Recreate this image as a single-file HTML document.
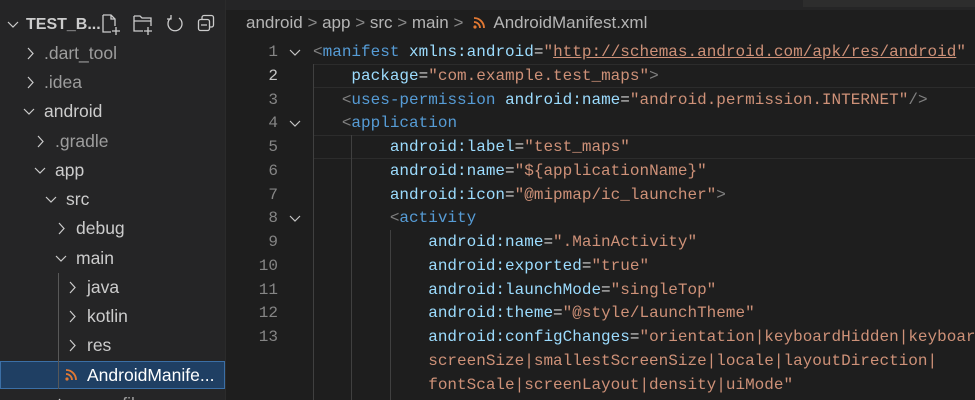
<!DOCTYPE html>
<html style="width:975px;height:400px;overflow:hidden"><head><meta charset="utf-8"><style>
html,body{margin:0;width:975px;height:400px;overflow:hidden}
body{background:#1e1e1e;position:relative;font-family:"Liberation Sans",sans-serif}
.sb{position:absolute;left:0;top:0;width:225px;height:400px;background:#252526;border-right:1px solid #2b2b2b;overflow:hidden}
.row{position:absolute;left:0;width:225px;height:29px;line-height:29px;color:#cccccc;font-size:17.5px;white-space:nowrap}
.chev{position:absolute;top:0;width:14px;height:29px}
.sel{background:#1f3f63;outline:1px solid #3b6fa6;outline-offset:-1px}
.tabs{position:absolute;left:226px;top:0;width:749px;height:10px;background:#252526}
.bc{position:absolute;left:246px;top:13px;font-size:17px;color:#b5b5b5;white-space:nowrap}
.code{position:absolute;left:0;top:2px;font-family:"Liberation Mono",monospace;font-size:16px}
.ln{position:absolute;left:226px;width:52px;text-align:right;color:#858585;height:24px;line-height:24px}
.l{position:absolute;left:313px;height:24px;line-height:24px;white-space:pre;color:#d4d4d4}
.t{color:#569cd6}.a{color:#9cdcfe}.s{color:#ce9178}.p{color:#808080}
.u{text-decoration:underline;text-decoration-color:#ce9178}
.g{position:absolute;width:1px;background:#404040}
.hl{position:absolute;left:313px;width:662px;height:22px;border-top:1px solid #2c2c2c;border-bottom:1px solid #2c2c2c}
.fold{position:absolute;left:288px;width:14px;height:24px}
</style></head><body>
<div class="sb">
 <div class="row" style="top:10px;font-weight:bold;font-size:16px;left:0">
  <svg class="chev" style="left:6px" viewBox="0 0 14 29"><path d="M2 12l5 5 5-5" stroke="#ccc" fill="none" stroke-width="1.2"/></svg>
  <span style="position:absolute;left:26px">TEST_B...</span>
  <svg style="position:absolute;left:101px;top:3px" width="20" height="22" viewBox="0 0 20 22"><path d="M2 2h8l4 4v7M2 2v17h8" stroke="#ccc" fill="none" stroke-width="1.3"/><path d="M10 2v4h4M15 14v8M11 18h8" stroke="#ccc" fill="none" stroke-width="1.3"/></svg>
  <svg style="position:absolute;left:132px;top:3px" width="22" height="22" viewBox="0 0 22 22"><path d="M2 3h6l2 2h9v8M2 3v15h9M2 8h17" stroke="#ccc" fill="none" stroke-width="1.3"/><path d="M16 14v8M12 18h8" stroke="#ccc" fill="none" stroke-width="1.3"/></svg>
  <svg style="position:absolute;left:165px;top:4px" width="20" height="20" viewBox="0 0 20 20"><path d="M14 4a7 7 0 1 1-8 0M6 1v4H2" stroke="#ccc" fill="none" stroke-width="1.3"/></svg>
  <svg style="position:absolute;left:197px;top:4px" width="18" height="18" viewBox="0 0 18 18"><rect x="1.5" y="5.5" width="11" height="11" rx="2" stroke="#ccc" fill="none" stroke-width="1.3"/><path d="M5 5V3.5a2 2 0 0 1 2-2h7.5a2 2 0 0 1 2 2V11a2 2 0 0 1-2 2H13M4 11h6" stroke="#ccc" fill="none" stroke-width="1.3"/></svg>
 </div>
 <div class="row" style="top:39px"><svg class="chev" style="left:24px" viewBox="0 0 14 29"><path d="M4 9l5 5.5-5 5.5" stroke="#ccc" fill="none" stroke-width="1.2"/></svg><span style="position:absolute;left:44px;color:#9d9d9d">.dart_tool</span></div>
 <div class="row" style="top:68px"><svg class="chev" style="left:24px" viewBox="0 0 14 29"><path d="M4 9l5 5.5-5 5.5" stroke="#ccc" fill="none" stroke-width="1.2"/></svg><span style="position:absolute;left:44px;color:#9d9d9d">.idea</span></div>
 <div class="row" style="top:97px"><svg class="chev" style="left:22px" viewBox="0 0 14 29"><path d="M2 12l5 5 5-5" stroke="#ccc" fill="none" stroke-width="1.2"/></svg><span style="position:absolute;left:44px">android</span></div>
 <div class="row" style="top:127px"><svg class="chev" style="left:34px" viewBox="0 0 14 29"><path d="M4 9l5 5.5-5 5.5" stroke="#ccc" fill="none" stroke-width="1.2"/></svg><span style="position:absolute;left:55px;color:#9d9d9d">.gradle</span></div>
 <div class="row" style="top:156px"><svg class="chev" style="left:33px" viewBox="0 0 14 29"><path d="M2 12l5 5 5-5" stroke="#ccc" fill="none" stroke-width="1.2"/></svg><span style="position:absolute;left:55px">app</span></div>
 <div class="row" style="top:185px"><svg class="chev" style="left:44px" viewBox="0 0 14 29"><path d="M2 12l5 5 5-5" stroke="#ccc" fill="none" stroke-width="1.2"/></svg><span style="position:absolute;left:66px">src</span></div>
 <div class="row" style="top:214px"><svg class="chev" style="left:55px" viewBox="0 0 14 29"><path d="M4 9l5 5.5-5 5.5" stroke="#ccc" fill="none" stroke-width="1.2"/></svg><span style="position:absolute;left:76px">debug</span></div>
 <div class="row" style="top:244px"><svg class="chev" style="left:54px" viewBox="0 0 14 29"><path d="M2 12l5 5 5-5" stroke="#ccc" fill="none" stroke-width="1.2"/></svg><span style="position:absolute;left:76px">main</span></div>
 <div style="position:absolute;left:58px;top:273px;width:1px;height:116px;background:#585858"></div>
 <div class="row" style="top:273px"><svg class="chev" style="left:66px" viewBox="0 0 14 29"><path d="M4 9l5 5.5-5 5.5" stroke="#ccc" fill="none" stroke-width="1.2"/></svg><span style="position:absolute;left:87px">java</span></div>
 <div class="row" style="top:302px"><svg class="chev" style="left:66px" viewBox="0 0 14 29"><path d="M4 9l5 5.5-5 5.5" stroke="#ccc" fill="none" stroke-width="1.2"/></svg><span style="position:absolute;left:87px">kotlin</span></div>
 <div class="row" style="top:331px"><svg class="chev" style="left:66px" viewBox="0 0 14 29"><path d="M4 9l5 5.5-5 5.5" stroke="#ccc" fill="none" stroke-width="1.2"/></svg><span style="position:absolute;left:87px">res</span></div>
 <div class="row sel" style="top:361px;height:28px;line-height:28px"><div style="position:absolute;left:58px;top:0;width:1px;height:28px;background:#585858"></div>
  <svg style="position:absolute;left:65px;top:8px" width="12" height="12" viewBox="0 0 12 12"><circle cx="2" cy="10" r="1.6" fill="#e37933"/><path d="M1 5a6 6 0 0 1 6 6M1 1a10 10 0 0 1 10 10" stroke="#e37933" fill="none" stroke-width="1.8"/></svg>
  <span style="position:absolute;left:87px;color:#fff">AndroidManife...</span></div>
 <div class="row" style="top:390px"><svg class="chev" style="left:55px" viewBox="0 0 14 29"><path d="M4 9l5 5.5-5 5.5" stroke="#ccc" fill="none" stroke-width="1.2"/></svg><span style="position:absolute;left:97px;color:#9d9d9d">profile</span></div>
</div>
<div class="tabs"></div>
<div style="position:absolute;left:803px;top:0;width:172px;height:7px;background:#2d2d2d"></div>
<div class="bc">android <span style="color:#888">&gt;</span> app <span style="color:#888">&gt;</span> src <span style="color:#888">&gt;</span> main <span style="color:#888">&gt;</span> &nbsp;<svg width="12" height="12" viewBox="0 0 12 12" style="vertical-align:-1px"><circle cx="2" cy="10" r="1.6" fill="#e37933"/><path d="M1 5a6 6 0 0 1 6 6M1 1a10 10 0 0 1 10 10" stroke="#e37933" fill="none" stroke-width="1.8"/></svg>&nbsp; AndroidManifest.xml</div>
<div class="code">
 <div class="hl" style="top:62px"></div>
 <div class="hl" style="top:133px"></div>
 <div class="g" style="left:313px;top:62px;height:338px"></div>
 <div class="g" style="left:351px;top:133px;height:267px"></div>
 <div class="g" style="left:390px;top:228px;height:172px"></div>
 <div class="ln" style="top:38px">1</div><div class="ln" style="top:62px;color:#c6c6c6">2</div><div class="ln" style="top:86px">3</div><div class="ln" style="top:109px">4</div><div class="ln" style="top:133px">5</div><div class="ln" style="top:157px">6</div><div class="ln" style="top:181px">7</div><div class="ln" style="top:204px">8</div><div class="ln" style="top:228px">9</div><div class="ln" style="top:252px">10</div><div class="ln" style="top:276px">11</div><div class="ln" style="top:299px">12</div><div class="ln" style="top:323px">13</div>
 <svg class="fold" style="top:38px" viewBox="0 0 14 24"><path d="M2 10l5 5 5-5" stroke="#c5c5c5" fill="none" stroke-width="1.2"/></svg>
 <svg class="fold" style="top:109px" viewBox="0 0 14 24"><path d="M2 10l5 5 5-5" stroke="#c5c5c5" fill="none" stroke-width="1.2"/></svg>
 <svg class="fold" style="top:204px" viewBox="0 0 14 24"><path d="M2 10l5 5 5-5" stroke="#c5c5c5" fill="none" stroke-width="1.2"/></svg>
 <div class="l" style="top:38px"><span class="p">&lt;</span><span class="t">manifest</span> <span class="a">xmlns:android</span>=<span class="s">"<span class="u">http://schemas.android.com/apk/res/android</span>"</span></div>
 <div class="l" style="top:62px">    <span class="a">package</span>=<span class="s">"com.example.test_maps"</span><span class="p">&gt;</span></div>
 <div class="l" style="top:86px">   <span class="p">&lt;</span><span class="t">uses-permission</span> <span class="a">android:name</span>=<span class="s">"android.permission.INTERNET"</span><span class="p">/&gt;</span></div>
 <div class="l" style="top:109px">   <span class="p">&lt;</span><span class="t">application</span></div>
 <div class="l" style="top:133px">        <span class="a">android:label</span>=<span class="s">"test_maps"</span></div>
 <div class="l" style="top:157px">        <span class="a">android:name</span>=<span class="s">"${applicationName}"</span></div>
 <div class="l" style="top:181px">        <span class="a">android:icon</span>=<span class="s">"@mipmap/ic_launcher"</span><span class="p">&gt;</span></div>
 <div class="l" style="top:204px">        <span class="p">&lt;</span><span class="t">activity</span></div>
 <div class="l" style="top:228px">            <span class="a">android:name</span>=<span class="s">".MainActivity"</span></div>
 <div class="l" style="top:252px">            <span class="a">android:exported</span>=<span class="s">"true"</span></div>
 <div class="l" style="top:276px">            <span class="a">android:launchMode</span>=<span class="s">"singleTop"</span></div>
 <div class="l" style="top:299px">            <span class="a">android:theme</span>=<span class="s">"@style/LaunchTheme"</span></div>
 <div class="l" style="top:323px">            <span class="a">android:configChanges</span>=<span class="s">"orientation|keyboardHidden|keyboard|</span></div>
 <div class="l" style="top:347px">            <span class="s">screenSize|smallestScreenSize|locale|layoutDirection|</span></div>
 <div class="l" style="top:371px">            <span class="s">fontScale|screenLayout|density|uiMode"</span></div>
</div>
</body></html>
